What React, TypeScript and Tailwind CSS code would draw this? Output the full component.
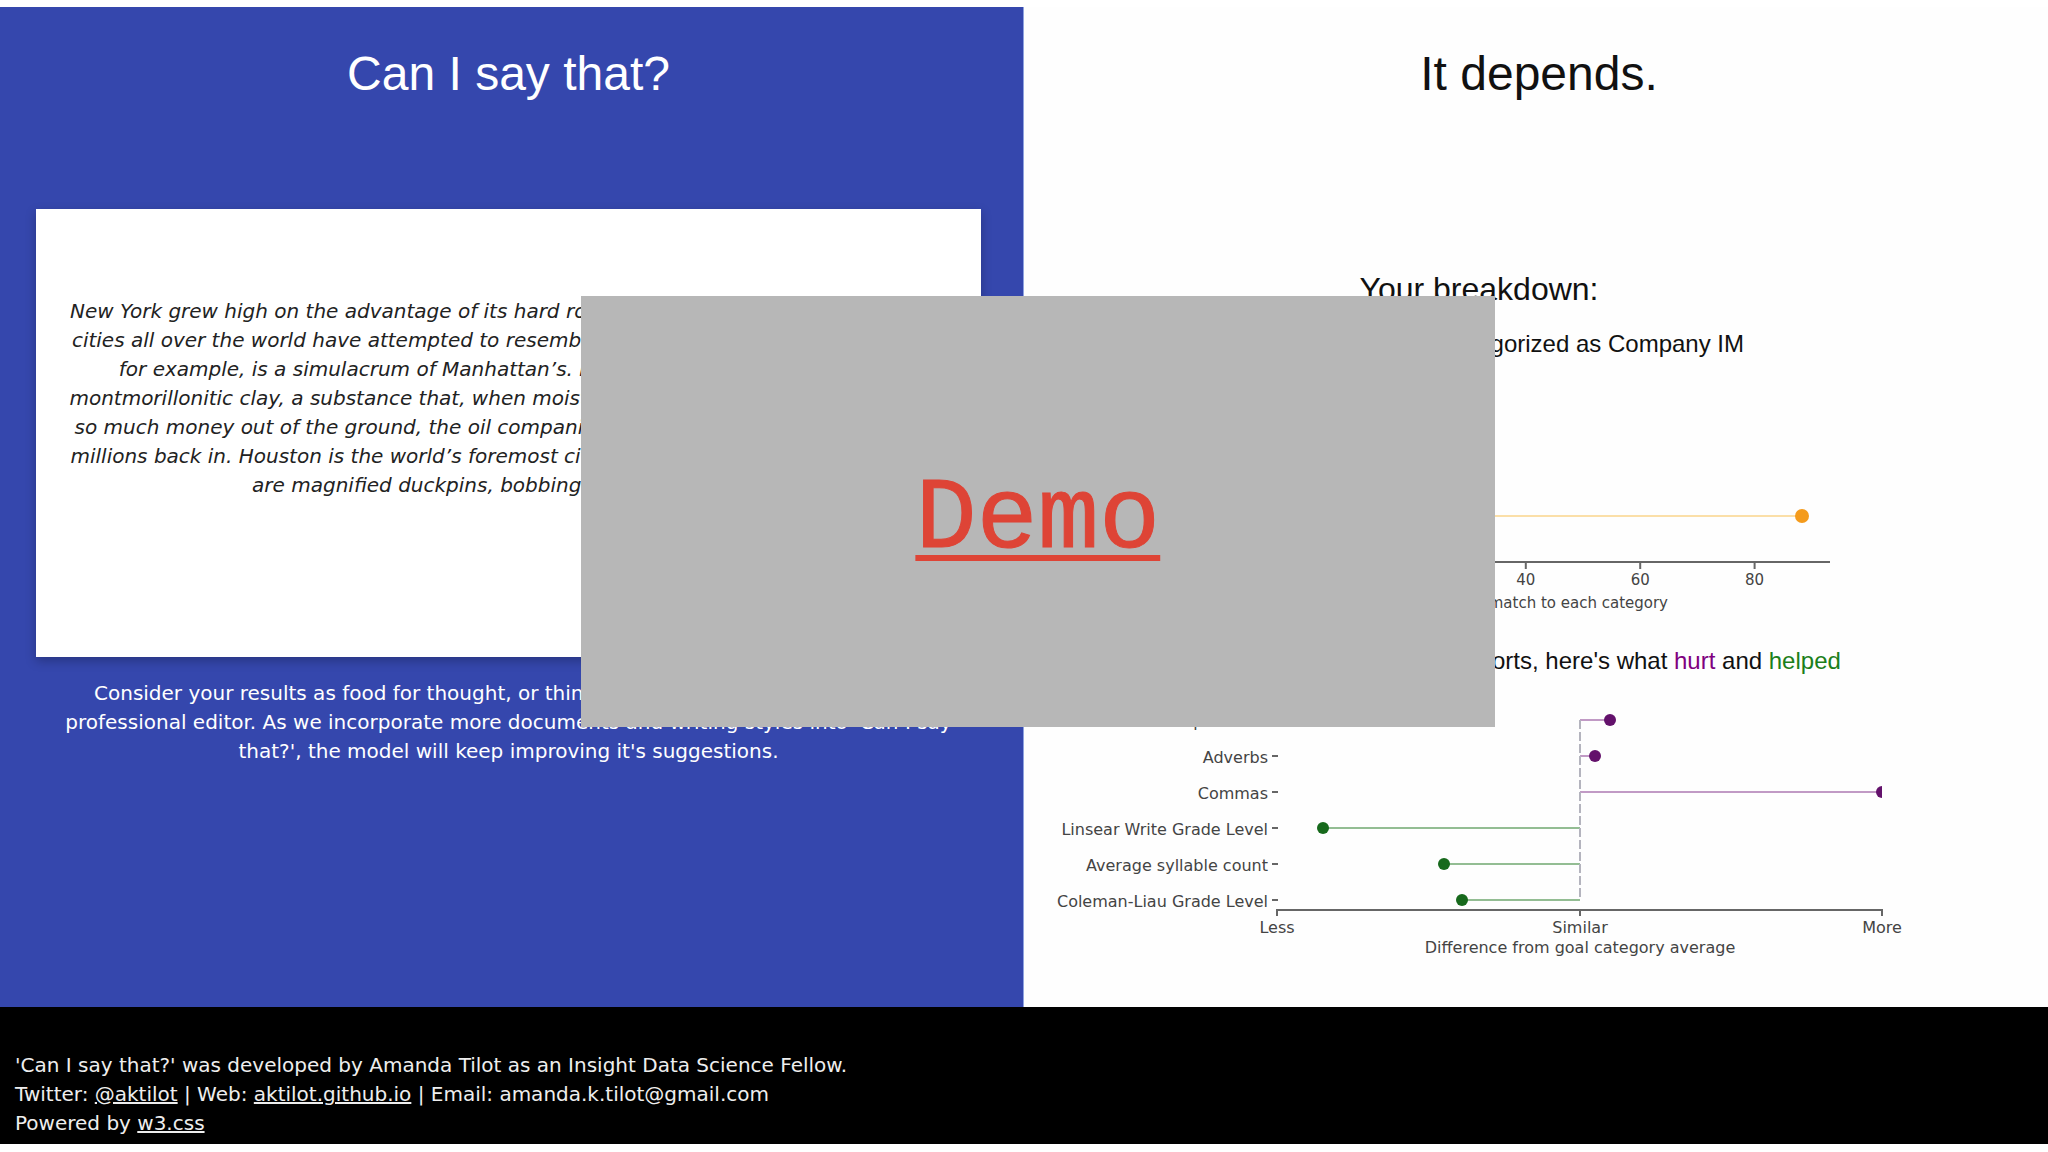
const excerpt = [
    'New York grew high on the advantage of its hard rock and, New York being what it was,',
    'cities all over the world have attempted to resemble New York. The skyline of Houston,',
    'for example, is a simulacrum of Manhattan’s. Houston rests on deep layers of',
    'montmorillonitic clay, a substance that, when moist, turns into mobile jelly. After taking',
    'so much money out of the ground, the oil companies of Houston have put hundreds of',
    'millions back in. Houston is the world’s foremost city in fat basements. Its tall buildings',
    'are magnified duckpins, bobbing in their own mire.',
]

const advice = [
    'Consider your results as food for thought, or things to discuss with your friend or a',
    "professional editor. As we incorporate more documents and writing styles into 'Can I say",
    "that?', the model will keep improving it's suggestions.",
]

const CENTER = 540
const AXIS_START = 237
const AXIS_END = 842

const features = [
    { label: 'Second pronouns', y: 20, x: 570, hurt: true },
    { label: 'Adverbs', y: 56, x: 555, hurt: true },
    { label: 'Commas', y: 92, x: 842, hurt: true },
    { label: 'Linsear Write Grade Level', y: 128, x: 283, hurt: false },
    { label: 'Average syllable count', y: 164, x: 404, hurt: false },
    { label: 'Coleman-Liau Grade Level', y: 200, x: 422, hurt: false },
]

function MatchChart() {
    const ticks = [0, 20, 40, 60, 80]
    return (
        <svg viewBox="0 0 880 124" className="block h-[124px] w-[880px] font-['DejaVu_Sans',sans-serif] text-[15px]" role="img" aria-label="Percent match to each category">
            <path d="M257 26H762" stroke="#fbdfa8" strokeWidth="2" />
            <circle cx="762" cy="26" r="7" fill="#f49b1c" />
            <path d="M230 72H790" stroke="#666" strokeWidth="2" />
            {ticks.map((t) => (
                <g key={t}>
                    <path d={`M${257 + t * 5.72} 73v6`} stroke="#666" strokeWidth="2" />
                    <text x={257 + t * 5.72} y="95" textAnchor="middle" fill="#444">{t}</text>
                </g>
            ))}
            <text x="628" y="118" textAnchor="end" fill="#444">Percent match to each category</text>
        </svg>
    )
}

function FeatureChart() {
    return (
        <svg viewBox="0 0 880 260" className="block h-[260px] w-[880px] font-['DejaVu_Sans',sans-serif] text-[16px]" role="img" aria-label="Difference from goal category average">
            <defs>
                <clipPath id="plot">
                    <rect x={AXIS_START} y="0" width={AXIS_END - AXIS_START} height="220" />
                </clipPath>
            </defs>
            {features.map((f) => (
                <g key={f.label}>
                    <text x="228" y={f.y + 7} textAnchor="end" fill="#444">{f.label}</text>
                    <path d={`M232 ${f.y}h6`} stroke="#666" strokeWidth="2" />
                    <g clipPath="url(#plot)">
                        <path d={`M${CENTER} ${f.y}H${f.x}`} stroke={f.hurt ? '#c19ac5' : '#93bd93'} strokeWidth="2" />
                        <circle cx={f.x} cy={f.y} r="6" fill={f.hurt ? '#63116b' : '#17691c'} />
                    </g>
                </g>
            ))}
            <path d={`M${CENTER} 20V200`} stroke="#b4b4be" strokeWidth="2" strokeDasharray="9 3" />
            <path d={`M${AXIS_START} 216V210H${AXIS_END}V216M${CENTER} 210v6`} fill="none" stroke="#666" strokeWidth="2" />
            <g textAnchor="middle" fill="#444">
                <text x={AXIS_START} y="233">Less</text>
                <text x={CENTER} y="233">Similar</text>
                <text x={AXIS_END} y="233">More</text>
                <text x={CENTER} y="253">Difference from goal category average</text>
            </g>
        </svg>
    )
}

function Lines({ lines }: { lines: string[] }) {
    return (
        <>
            {lines.map((line) => (
                <span key={line} className="block whitespace-nowrap">{line}</span>
            ))}
        </>
    )
}

export default function App() {
    return (
        <div className="relative bg-white py-[7px] font-['DejaVu_Sans',sans-serif] text-[20px] leading-[29px]">
            <main className="grid min-h-[1000px] grid-cols-2">
                <section className="border-r border-[#8fa3e0] bg-[#3547ad] pt-[37px] pr-[42px] pl-9 text-center text-white">
                    <h1 className="font-['Liberation_Sans',sans-serif] text-[48px] leading-[60px]">Can I say that?</h1>
                    <div className="mt-[105px] flex h-[448px] flex-col items-center bg-white pt-[88px] text-[#222] shadow-[0_4px_10px_rgba(0,0,0,0.25)]">
                        <p className="flex flex-col items-center italic"><Lines lines={excerpt} /></p>
                    </div>
                    <p className="mt-[22px] flex flex-col items-center"><Lines lines={advice} /></p>
                </section>

                <section className="bg-[#fefefe] pt-[37px] font-['Liberation_Sans',sans-serif] text-[24px] text-[#111]">
                    <h1 className="pl-1.5 text-center text-[48px] leading-[60px]">It depends.</h1>
                    <div className="pr-[114px] text-center">
                        <h2 className="mt-[165px] text-[32px] leading-[40px]">Your breakdown:</h2>
                        <p className="mt-5">Your submission was categorized as Company IM</p>
                    </div>
                    <div className="mt-[132px] pl-4">
                        <MatchChart />
                    </div>
                    <p className="mt-8 pr-[114px] text-center whitespace-nowrap">
                        Compared to past Company IM reports, here's what <span className="text-[#800080]">hurt</span> and <span className="text-[#1b7f1b]">helped</span>
                    </p>
                    <div className="mt-[25px] pl-4">
                        <FeatureChart />
                    </div>
                </section>
            </main>

            <footer className="bg-black px-[15px] pt-11 pb-1.5 text-[#eee]">
                <p>'Can I say that?' was developed by Amanda Tilot as an Insight Data Science Fellow.</p>
                <p>
                    Twitter: <a href="#twitter" className="underline">@aktilot</a> | Web: <a href="#web" className="underline">aktilot.github.io</a> | Email: amanda.k.tilot@gmail.com
                </p>
                <p>Powered by <a href="#w3css" className="underline">w3.css</a></p>
            </footer>

            {/* demo banner over both panels */}
            <div className="absolute top-[296px] left-[28.35%] flex h-[431px] w-[44.65%] items-center justify-center bg-[#b7b7b7] pt-4">
                <a href="#demo" className="font-['Liberation_Mono',monospace] text-[102px] leading-[110px] text-[#de4436] underline decoration-[6px] underline-offset-[8px] [-webkit-text-stroke:1px_#de4436]">Demo</a>
            </div>
        </div>
    )
}
